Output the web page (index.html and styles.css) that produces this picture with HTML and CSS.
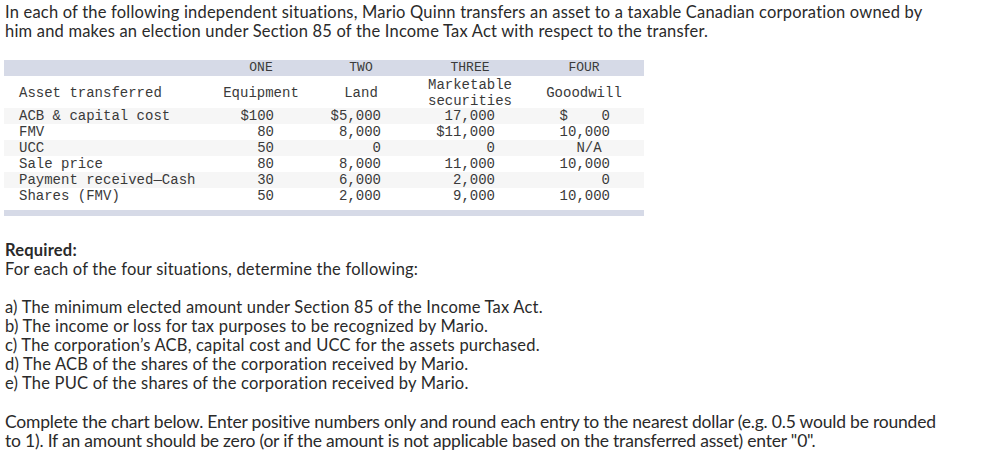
FILE: index.html
```html
<!DOCTYPE html>
<html lang="en">
<head>
<meta charset="utf-8">
<title>Section 85 rollover</title>
<link rel="stylesheet" href="styles.css">
</head>
<body>
<p class="intro">In each of the following independent situations, Mario Quinn transfers an asset to a taxable Canadian corporation owned by him and makes an election under Section 85 of the Income Tax Act with respect to the transfer.</p>

<div class="chart">
  <div class="row bar-top">
    <span class="lab"></span>
    <span class="hd">ONE</span>
    <span class="hd">TWO</span>
    <span class="hd">THREE</span>
    <span class="hd">FOUR</span>
  </div>
  <div class="row head">
    <span class="lab">Asset transferred</span>
    <span class="hd">Equipment</span>
    <span class="hd">Land</span>
    <span class="hd">Marketable<br>securities</span>
    <span class="hd">Gooodwill</span>
  </div>
  <div class="row shade">
    <span class="lab">ACB &amp; capital cost</span>
    <span class="num c1">$100</span>
    <span class="num c2">$5,000</span>
    <span class="num c3">17,000</span>
    <span class="num c4 pre">$    0</span>
  </div>
  <div class="row">
    <span class="lab">FMV</span>
    <span class="num c1">80</span>
    <span class="num c2">8,000</span>
    <span class="num c3">$11,000</span>
    <span class="num c4">10,000</span>
  </div>
  <div class="row shade">
    <span class="lab">UCC</span>
    <span class="num c1">50</span>
    <span class="num c2">0</span>
    <span class="num c3">0</span>
    <span class="num c4 pre">N/A </span>
  </div>
  <div class="row">
    <span class="lab">Sale price</span>
    <span class="num c1">80</span>
    <span class="num c2">8,000</span>
    <span class="num c3">11,000</span>
    <span class="num c4">10,000</span>
  </div>
  <div class="row shade">
    <span class="lab">Payment received—Cash</span>
    <span class="num c1">30</span>
    <span class="num c2">6,000</span>
    <span class="num c3">2,000</span>
    <span class="num c4">0</span>
  </div>
  <div class="row">
    <span class="lab">Shares (FMV)</span>
    <span class="num c1">50</span>
    <span class="num c2">2,000</span>
    <span class="num c3">9,000</span>
    <span class="num c4">10,000</span>
  </div>
  <div class="bar-bottom"></div>
</div>

<div class="required">
  <p><strong>Required:</strong><br>For each of the four situations, determine the following:</p>
  <p>a) The minimum elected amount under Section 85 of the Income Tax Act.<br>
  b) The income or loss for tax purposes to be recognized by Mario.<br>
  c) The corporation’s ACB, capital cost and UCC for the assets purchased.<br>
  d) The ACB of the shares of the corporation received by Mario.<br>
  e) The PUC of the shares of the corporation received by Mario.</p>
  <p class="note">Complete the chart below. Enter positive numbers only and round each entry to the nearest dollar (e.g. 0.5 would be rounded to 1). If an amount should be zero (or if the amount is not applicable based on the transferred asset) enter "0".</p>
</div>
</body>
</html>
```

FILE: styles.css
```css
html, body {
  margin: 0;
  padding: 0;
  background: #ffffff;
}

body {
  padding: 3px 5px 0 5px;
  font-family: Lato, "Open Sans", sans-serif;
  font-size: 16.5px;
  line-height: 19px;
  color: #2a2a2a;
}

p {
  margin: 0;
}

.intro {
  max-width: 928px;
  letter-spacing: 0.2px;
  margin-bottom: 19px;
}

.chart {
  width: 640px;
  margin-left: -1px;
  font-family: "Liberation Mono", "DejaVu Sans Mono", monospace;
  font-size: 14px;
  line-height: 16px;
  color: #3a3a3a;
}

.row {
  display: grid;
  grid-template-columns: 206px 102px 98px 120px 108px 6px;
}

.bar-top {
  background: #d6dae7;
  height: 16px;
  font-size: 13px;
}

.head {
  align-items: center;
  height: 32px;
  padding-top: 1px;
  box-sizing: border-box;
}

.shade {
  background: #f6f6f6;
}

.lab {
  padding-left: 15px;
  white-space: pre;
}

.hd {
  text-align: center;
}

.num {
  text-align: right;
  white-space: pre;
}

.c1 { padding-right: 38px; }
.c2 { padding-right: 29px; }
.c3 { padding-right: 35px; }
.c4 { padding-right: 28px; }

.bar-bottom {
  margin-top: 6px;
  height: 6px;
  background: #d6dae7;
}

.required {
  margin-top: 25px;
  letter-spacing: 0.2px;
}

.required p {
  margin-bottom: 19px;
}

.required .note {
  max-width: 935px;
  font-size: 17.5px;
  letter-spacing: -0.2px;
  margin-bottom: 0;
}
```
